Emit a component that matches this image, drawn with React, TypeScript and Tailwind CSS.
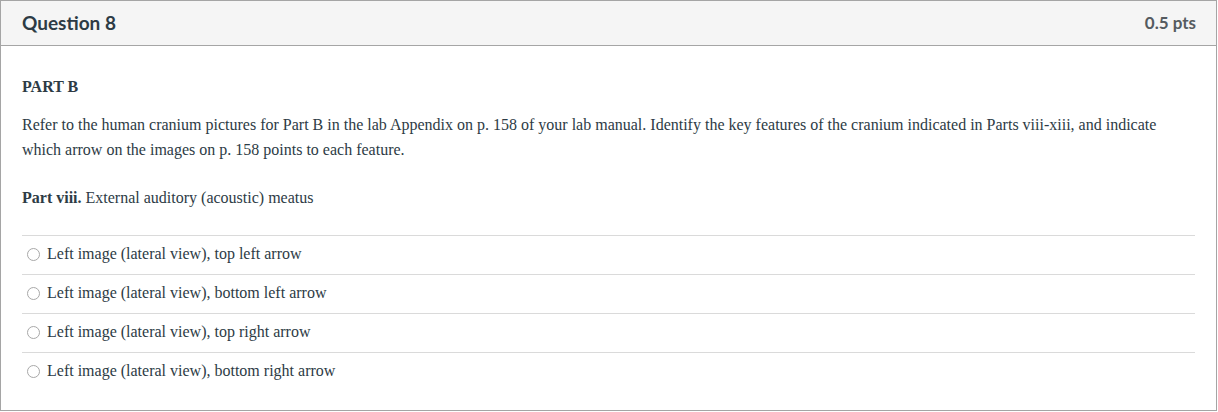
import React from 'react';

const options = [
  'Left image (lateral view), top left arrow',
  'Left image (lateral view), bottom left arrow',
  'Left image (lateral view), top right arrow',
  'Left image (lateral view), bottom right arrow',
];

export default function App() {
  return (
    <div className="w-[1217px] h-[411px] border border-[#a5a5a5] bg-white text-[#2d3b45] flex flex-col">
      <div className="h-[45px] shrink-0 bg-[#f5f5f5] border-b border-[#a5a5a5] flex items-center justify-between pl-[21px] pr-[20px] font-['Lato',sans-serif] font-bold">
        <span className="text-[19px]">Question 8</span>
        <span className="text-[17px] text-[#555b60]">0.5 pts</span>
      </div>
      <div className="flex-1 px-[21px] pt-[31px] font-['Liberation_Serif',serif] text-[16px]">
        <p className="font-bold leading-[20px]">PART B</p>
        <p className="mt-[15px] leading-[25px]">
          Refer to the human cranium pictures for Part B in the lab Appendix on p. 158 of your lab manual. Identify the key features of the cranium indicated in Parts viii-xiii, and indicate which arrow on the images on p. 158 points to each feature.
        </p>
        <p className="mt-[26px] leading-[20px]">
          <span className="font-bold">Part viii.</span> External auditory (acoustic) meatus
        </p>
        <div className="mt-[27px]">
          {options.map((o) => (
            <label key={o} className="flex items-center h-[39px] pb-[3px] border-t border-[#dadada]">
              <span className="ml-[5px] mt-[2px] w-[13px] h-[13px] rounded-full border border-[#a8a8a8] bg-white" />
              <span className="ml-[7px]">{o}</span>
            </label>
          ))}
        </div>
      </div>
    </div>
  );
}
